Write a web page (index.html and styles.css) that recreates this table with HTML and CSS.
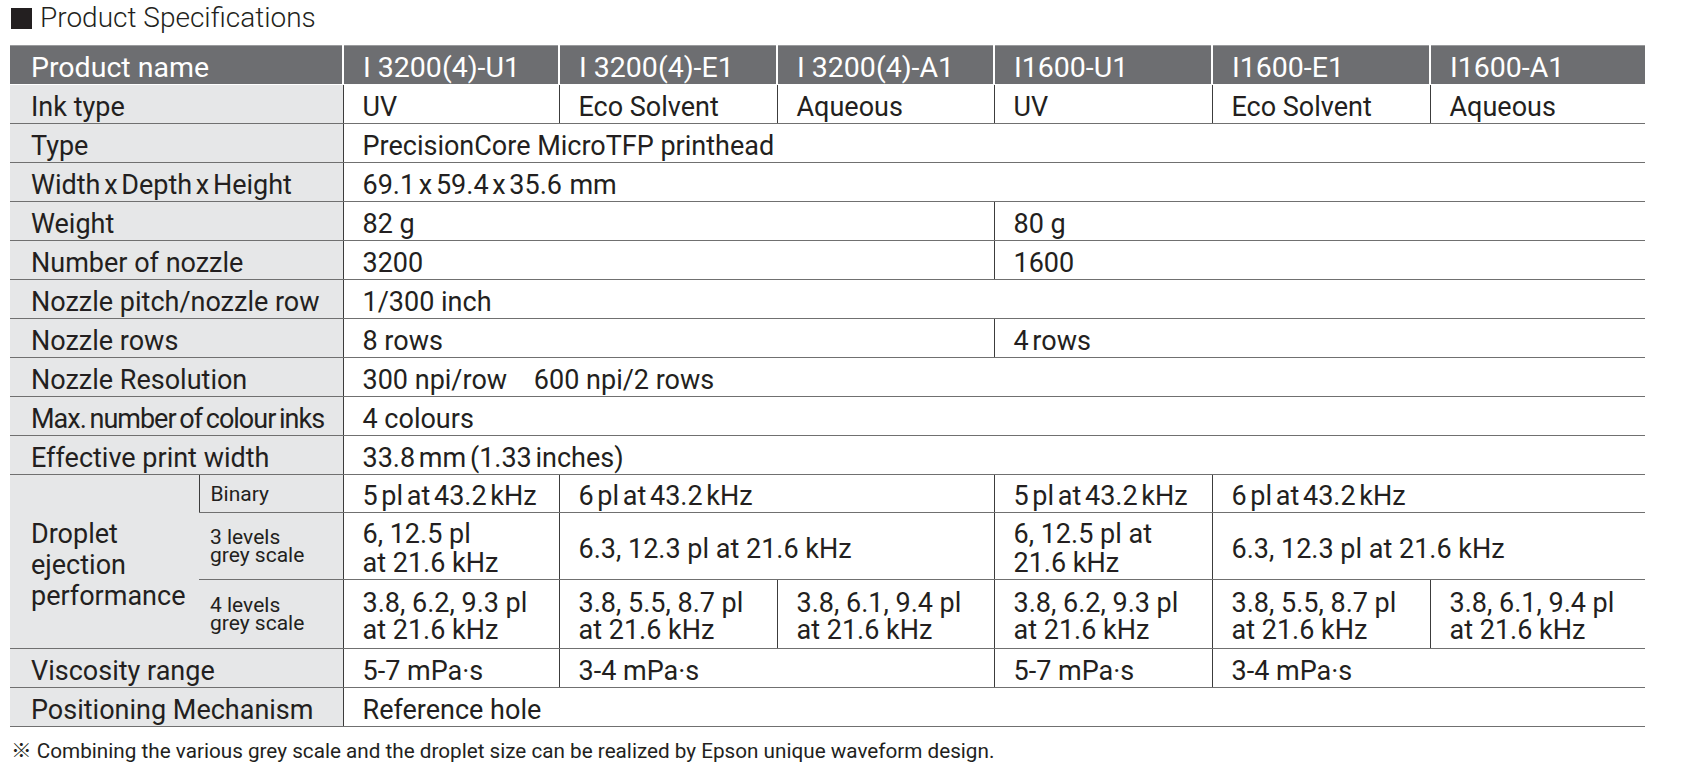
FILE: index.html
```html
<!DOCTYPE html>
<html lang="en">
<head>
<meta charset="utf-8">
<title>Product Specifications</title>
<link rel="stylesheet" href="styles.css">
</head>
<body>
<div class="page">
  <h2 class="title"><span class="title-mark"></span><span>Product Specifications</span></h2>
  <table class="spec">
    <colgroup>
      <col class="c-lab1"><col class="c-lab2">
      <col class="c-d1"><col class="c-d2"><col class="c-d3"><col class="c-d4"><col class="c-d5"><col class="c-d6">
    </colgroup>
    <thead>
      <tr class="r-head">
        <th colspan="2" class="first">Product name</th>
        <th>I 3200(4)-U1</th>
        <th>I 3200(4)-E1</th>
        <th>I 3200(4)-A1</th>
        <th>I1600-U1</th>
        <th>I1600-E1</th>
        <th>I1600-A1</th>
      </tr>
    </thead>
    <tbody>
      <tr class="r">
        <td colspan="2" class="lab">Ink type</td>
        <td>UV</td><td>Eco Solvent</td><td>Aqueous</td><td>UV</td><td>Eco Solvent</td><td>Aqueous</td>
      </tr>
      <tr class="r">
        <td colspan="2" class="lab">Type</td>
        <td colspan="6">PrecisionCore MicroTFP printhead</td>
      </tr>
      <tr class="r">
        <td colspan="2" class="lab tight">Width x Depth x Height</td>
        <td colspan="6" class="tight">69.1 x 59.4 x 35.6&nbsp; mm</td>
      </tr>
      <tr class="r">
        <td colspan="2" class="lab">Weight</td>
        <td colspan="3">82 g</td><td colspan="3">80 g</td>
      </tr>
      <tr class="r">
        <td colspan="2" class="lab">Number of nozzle</td>
        <td colspan="3">3200</td><td colspan="3">1600</td>
      </tr>
      <tr class="r">
        <td colspan="2" class="lab">Nozzle pitch/nozzle row</td>
        <td colspan="6">1/300 inch</td>
      </tr>
      <tr class="r">
        <td colspan="2" class="lab">Nozzle rows</td>
        <td colspan="3">8 rows</td><td colspan="3" class="tight">4 rows</td>
      </tr>
      <tr class="r">
        <td colspan="2" class="lab">Nozzle Resolution</td>
        <td colspan="6">300 npi/row&nbsp;&nbsp;&nbsp; 600 npi/2 rows</td>
      </tr>
      <tr class="r">
        <td colspan="2" class="lab condensed">Max. number of colour inks</td>
        <td colspan="6">4 colours</td>
      </tr>
      <tr class="r">
        <td colspan="2" class="lab">Effective print width</td>
        <td colspan="6" class="tight">33.8 mm (1.33 inches)</td>
      </tr>
      <tr class="r-bin">
        <td rowspan="3" class="lab group">Droplet<br>ejection<br>performance</td>
        <td class="lab sub">Binary</td>
        <td class="tight">5 pl at 43.2 kHz</td>
        <td colspan="2" class="tight">6 pl at 43.2 kHz</td>
        <td class="tight">5 pl at 43.2 kHz</td>
        <td colspan="2" class="tight">6 pl at 43.2 kHz</td>
      </tr>
      <tr class="r-lv3">
        <td class="lab sub">3 levels<br>grey scale</td>
        <td class="two lv3">6, 12.5 pl<br>at 21.6 kHz</td>
        <td colspan="2">6.3, 12.3 pl at 21.6 kHz</td>
        <td class="two lv3">6, 12.5 pl at<br>21.6 kHz</td>
        <td colspan="2">6.3, 12.3 pl at 21.6 kHz</td>
      </tr>
      <tr class="r-lv4">
        <td class="lab sub">4 levels<br>grey scale</td>
        <td class="two">3.8, 6.2, 9.3 pl<br>at 21.6 kHz</td>
        <td class="two">3.8, 5.5, 8.7 pl<br>at 21.6 kHz</td>
        <td class="two">3.8, 6.1, 9.4 pl<br>at 21.6 kHz</td>
        <td class="two">3.8, 6.2, 9.3 pl<br>at 21.6 kHz</td>
        <td class="two">3.8, 5.5, 8.7 pl<br>at 21.6 kHz</td>
        <td class="two">3.8, 6.1, 9.4 pl<br>at 21.6 kHz</td>
      </tr>
      <tr class="r">
        <td colspan="2" class="lab">Viscosity range</td>
        <td>5-7 mPa·s</td><td colspan="2">3-4 mPa·s</td>
        <td>5-7 mPa·s</td><td colspan="2">3-4 mPa·s</td>
      </tr>
      <tr class="r">
        <td colspan="2" class="lab">Positioning Mechanism</td>
        <td colspan="6">Reference hole</td>
      </tr>
    </tbody>
  </table>
  <p class="note">※ Combining the various grey scale and the droplet size can be realized by Epson unique waveform design.</p>
</div>
</body>
</html>
```

FILE: styles.css
```css
* { box-sizing: border-box; }

html, body {
  margin: 0;
  background: #ffffff;
}

body {
  font-family: Roboto, "Liberation Sans", "Noto Sans CJK JP", sans-serif;
  font-weight: 400;
  color: #231f20;
}

.page {
  padding: 3px 0 0 11px;
}

.title {
  display: flex;
  align-items: center;
  gap: 8px;
  margin: 0 0 12px 0;
  height: 30px;
  font-size: 28px;
  font-weight: 300;
  line-height: 30px;
}

.title-mark {
  display: block;
  width: 21px;
  height: 21px;
  background: #231f20;
}

.spec {
  border-collapse: collapse;
  table-layout: fixed;
  width: 1635px;
  margin-left: -1px;
  font-size: 27px;
  line-height: 1;
}

.c-lab1 { width: 189px; }
.c-lab2 { width: 144px; }
.c-d1 { width: 216px; }
.c-d2 { width: 218px; }
.c-d3 { width: 217px; }
.c-d4 { width: 218px; }
.c-d5 { width: 218px; }
.c-d6 { width: 215px; }

.spec th,
.spec td {
  padding: 6px 0 0 19px;
  vertical-align: middle;
  white-space: nowrap;
  text-align: left;
  font-weight: 400;
}

.spec th {
  background: #6d6e71;
  color: #ffffff;
  font-size: 28.5px;
  border-top: 1px solid #9a9b9d;
  border-bottom: 1px solid #ffffff;
  border-left: 2px solid #ffffff;
}

.spec th.first {
  border-left: none;
  padding-left: 21px;
}

.spec td {
  border-top: 1px solid #707070;
  border-bottom: 1px solid #707070;
  border-left: 1px solid #3c3c3c;
}

.spec td.lab {
  background: #e6e7e8;
  padding-left: 21px;
}

.spec td.lab:first-child {
  border-left: none;
}

.spec td.sub {
  padding: 0 0 0 11px;
  font-size: 21px;
  line-height: 18px;
}

.spec td.group {
  line-height: 31px;
  padding-top: 8px;
}

.spec td.two {
  line-height: 27px;
}

.spec td.lv3 {
  line-height: 29.5px;
}

.tight {
  word-spacing: -3px;
}

.condensed {
  letter-spacing: -1px;
  word-spacing: -2px;
}

.r-head { height: 39px; }
.r { height: 39px; }
.r-bin { height: 38px; }
.r-lv3 { height: 67px; }
.r-lv4 { height: 69px; }

.note {
  margin: 12px 0 0 0;
  font-size: 20.7px;
  line-height: 24px;
}
```
